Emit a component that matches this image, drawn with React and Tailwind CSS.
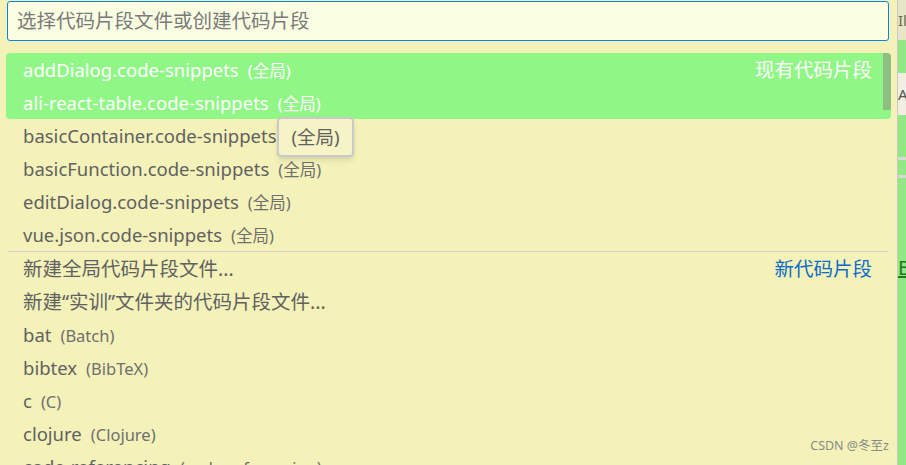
import React from 'react';

const snippets = [
  { label: 'addDialog.code-snippets', desc: '(全局)', active: true, right: '现有代码片段' },
  { label: 'ali-react-table.code-snippets', desc: '(全局)', active: true },
  { label: 'basicContainer.code-snippets' },
  { label: 'basicFunction.code-snippets', desc: '(全局)' },
  { label: 'editDialog.code-snippets', desc: '(全局)' },
  { label: 'vue.json.code-snippets', desc: '(全局)' },
];

const others = [
  { label: '新建全局代码片段文件...', right: '新代码片段', cjk: true },
  { label: '新建“实训”文件夹的代码片段文件...', cjk: true },
  { label: 'bat', desc: '(Batch)' },
  { label: 'bibtex', desc: '(BibTeX)' },
  { label: 'c', desc: '(C)' },
  { label: 'clojure', desc: '(Clojure)' },
  { label: 'code-referencing', desc: '(code-referencing)' },
];

function Row({ item }) {
  return (
    <div className="flex h-[33px] items-baseline pl-[17px] pr-[19px] leading-[33px]">
      <span
        className={`whitespace-nowrap ${item.cjk ? 'text-[19.5px]' : 'text-[18.5px]'} ${
          item.active ? 'text-white' : 'text-[#616161]'
        }`}
      >
        {item.label}
      </span>
      {item.desc && (
        <span className={`ml-[9px] text-[16.5px] whitespace-nowrap ${item.active ? 'text-white' : 'text-[#6f6f6f]'}`}>
          {item.desc}
        </span>
      )}
      {item.right && (
        <span className={`ml-auto text-[19.5px] ${item.active ? 'text-white' : 'text-[#0b6bc9]'}`}>
          {item.right}
        </span>
      )}
    </div>
  );
}

export default function App() {
  return (
    <div
      className="flex h-[465px] w-[906px] overflow-hidden bg-[#f4f2b9]"
      style={{ fontFamily: '"Noto Sans", "Noto Sans CJK SC", sans-serif' }}
    >
      {/* quick pick panel */}
      <div className="relative h-full w-[897px] shrink-0 overflow-hidden rounded-br-md bg-[#f4f2b9] pt-px">
        <div className="mx-[7px] flex h-[40px] w-[882px] items-center rounded-[3px] border border-[#0a84e0] bg-[#fafee2] px-[9px]">
          <span className="text-[19.5px] text-[#7a7a7a]">选择代码片段文件或创建代码片段</span>
        </div>

        <div className="relative mt-[12px]">
          {/* highlighted group */}
          <div className="relative mx-[6px] overflow-hidden rounded-[4px] bg-[#90f786]">
            {snippets.slice(0, 2).map((s) => (
              <Row key={s.label} item={s} />
            ))}
            <div className="absolute right-0 top-0 h-[57px] w-[8px] bg-[#8a8a7a]/50" />
          </div>
          <div className="mx-[6px]">
            {snippets.slice(2).map((s) => (
              <Row key={s.label} item={s} />
            ))}
          </div>
          <div className="mx-[8px] my-0 h-px w-[880px] bg-[#d2d2c8]" />
          <div className="mx-[6px]">
            {others.map((s) => (
              <Row key={s.label} item={s} />
            ))}
          </div>

          {/* hover tooltip */}
          <div className="absolute left-[277px] top-[64px] flex h-[40px] w-[77px] items-center justify-center rounded-[4px] border-2 border-[#cacaca] bg-[#f6f4c6] shadow-md">
            <span className="text-[18.5px] text-[#616161]">(全局)</span>
          </div>
        </div>

        <div className="absolute bottom-[9px] right-[8px] text-[12.5px] text-[#8a8a8a]">CSDN @冬至z</div>
      </div>

      {/* editor behind */}
      <div className="flex h-full flex-1 flex-col border-l border-[#c8c8c8]">
        <div className="flex h-[40px] items-center bg-[#e8e6c9] text-[15px] leading-none text-[#6b6b50]">Il</div>
        <div className="h-[33px] bg-[#90e983]" />
        <div className="flex h-[42px] items-center bg-[#f0efe2] text-[15px] text-[#555]">A</div>
        <div className="h-[42px] bg-[#90e983]" />
        <div className="h-[3px] bg-[#d8d8d8]" />
        <div className="h-[15px] bg-[#90e983]" />
        <div className="h-[3px] bg-[#d8d8d8]" />
        <div className="h-[80px] bg-[#90e983]" />
        <div className="h-[27px] bg-[#90e983] text-[20px] leading-none text-[#1f7a1f] underline">B</div>
        <div className="flex-1 bg-[#90e983]" />
      </div>
    </div>
  );
}
